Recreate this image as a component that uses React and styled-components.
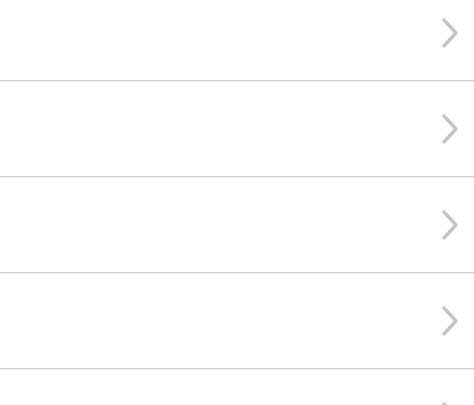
import React from 'react';
import styled, { createGlobalStyle } from 'styled-components';

const GlobalStyle = createGlobalStyle`
  html, body {
    margin: 0;
    padding: 0;
    background: #fff;
    font-family: "Liberation Sans", Arial, sans-serif;
    overflow: hidden;
  }
`;

const List = styled.div`
  display: flex;
  flex-direction: column;
  margin-top: -15px;
`;

const Row = styled.div`
  display: flex;
  align-items: center;
  justify-content: flex-end;
  height: 96px;
  box-sizing: border-box;
  padding-right: 14px;
  border-bottom: 1px solid #cbcbcb;
  box-shadow: 0 1px 0 #f0f0f0;
  flex-shrink: 0;
`;

const Chevron = () => (
  <svg width="20" height="32" viewBox="0 0 20 32">
    <path
      d="M4 3 L16 16 L4 29"
      fill="none"
      stroke="#c4c4c4"
      strokeWidth="3.4"
      strokeLinecap="round"
      strokeLinejoin="round"
    />
  </svg>
);

export default function App() {
  const rows = [0, 1, 2, 3, 4];
  return (
    <>
      <GlobalStyle />
      <List>
        {rows.map((r) => (
          <Row key={r}>
            <Chevron />
          </Row>
        ))}
      </List>
    </>
  );
}
